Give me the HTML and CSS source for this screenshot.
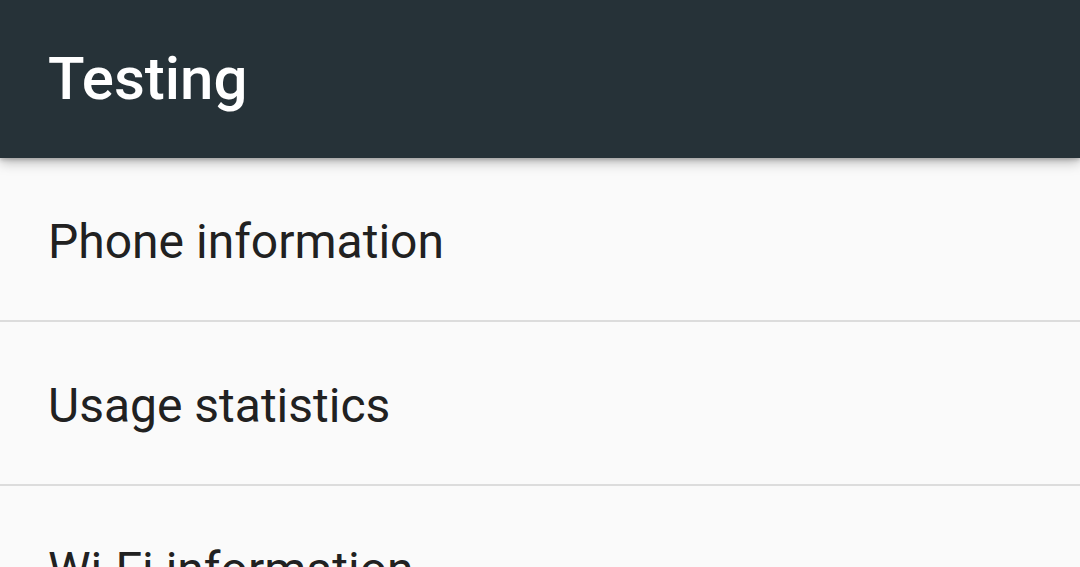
FILE: index.html
```html
<!DOCTYPE html>
<html lang="en">
<head>
<meta charset="utf-8">
<title>Testing</title>
<link rel="stylesheet" href="styles.css">
</head>
<body>
<header class="appbar">
  <h1 class="appbar-title">Testing</h1>
</header>
<main class="list">
  <div class="list-item">Phone information</div>
  <div class="list-item">Usage statistics</div>
  <div class="list-item">Wi-Fi information</div>
</main>
</body>
</html>
```
FILE: styles.css
```css
html, body {
  margin: 0;
  padding: 0;
  height: 100%;
  overflow: hidden;
}
body {
  background: #fafafa;
  font-family: Roboto, "Liberation Sans", sans-serif;
}
.appbar {
  position: relative;
  z-index: 2;
  height: 158px;
  background: #263238;
  box-shadow: 0 4px 12px rgba(0, 0, 0, 0.28), 0 2px 4px rgba(0, 0, 0, 0.18);
  display: flex;
  align-items: flex-start;
  padding: 0 48px;
  box-sizing: border-box;
}
.appbar-title {
  margin: 0;
  padding-top: 42px;
  font-size: 60px;
  line-height: 74px;
  font-weight: 500;
  color: #ffffff;
}
.list {
  display: flex;
  flex-direction: column;
}
.list-item {
  flex: none;
  height: 164px;
  box-sizing: border-box;
  border-bottom: 2px solid #dcdcdc;
  padding: 56px 48px 0;
  font-size: 48px;
  line-height: 56px;
  color: #212121;
  white-space: nowrap;
}
```
